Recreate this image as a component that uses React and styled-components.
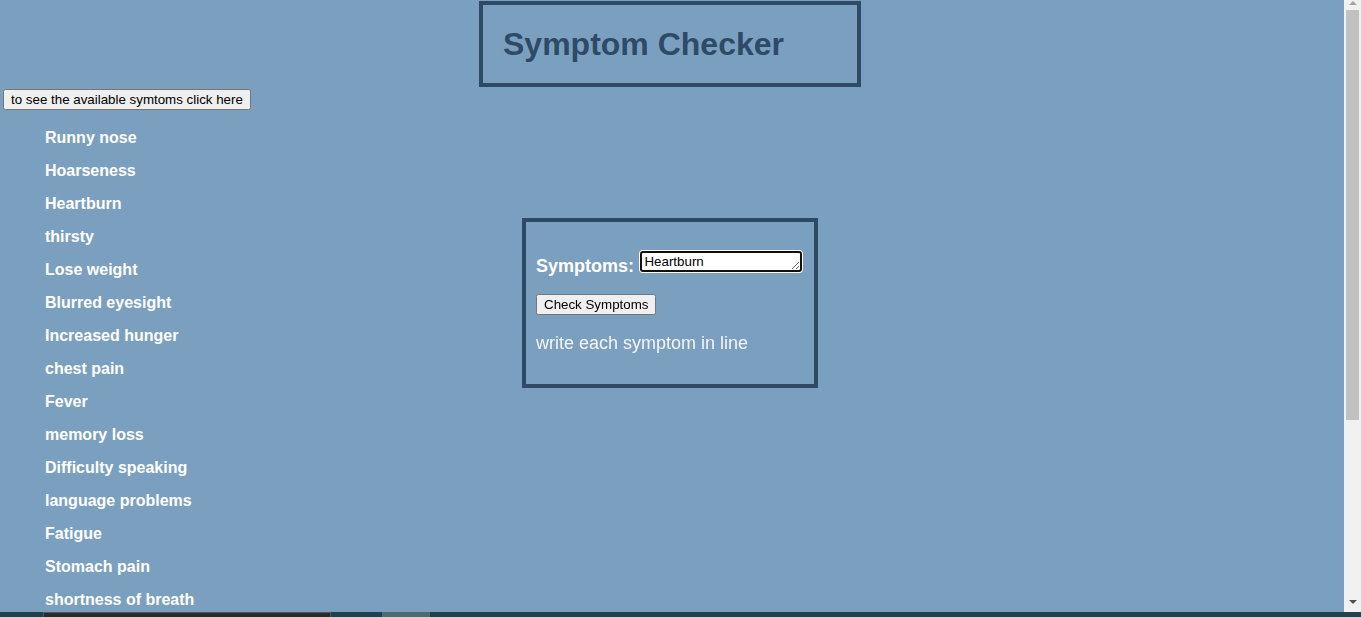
import React, { useEffect, useRef } from "react";
import styled, { createGlobalStyle } from "styled-components";

const Global = createGlobalStyle`
  html, body { margin: 0; padding: 0; height: 100%; overflow: hidden; }
  body { font-family: "Liberation Sans", Arial, sans-serif; background: #7ba0bf; }
  #root { height: 100%; }
`;

const Shell = styled.div`
  height: 617px;
  display: flex;
  flex-direction: column;
`;

const Viewport = styled.div`
  height: 612px;
  display: flex;
`;

const Scroller = styled.div`
  flex: 1;
  overflow: hidden;
  background: #7ba0bf;
`;

const ScrollBar = styled.div`
  width: 17px;
  background: #f1f1f1;
  display: flex;
  flex-direction: column;
  align-items: center;
`;

const ArrowCell = styled.div`
  height: ${(p) => p.$h}px;
  width: 100%;
  display: flex;
  justify-content: center;
  align-items: flex-start;
  padding-top: ${(p) => p.$pt}px;
  box-sizing: border-box;
`;

const Tri = styled.div`
  width: 0;
  height: 0;
  border-left: 4px solid transparent;
  border-right: 4px solid transparent;
  ${(p) =>
    p.$down
      ? `border-top: 4px solid #505050;`
      : `border-bottom: 4px solid #a3a3a3;`}
`;

const Thumb = styled.div`
  width: 13px;
  height: 410px;
  background: #c1c1c1;
`;

const Spacer = styled.div`
  flex: 1;
`;

const Page = styled.div`
  padding-right: 4px;
`;

const Header = styled.header`
  display: flex;
  justify-content: center;
  padding-top: 1px;
`;

const TitleBox = styled.div`
  width: 354px;
  height: 78px;
  padding-left: 20px;
  border: 4px solid #2e4a64;
  display: flex;
  align-items: center;
`;

const Title = styled.h1`
  margin: 0;
  font-size: 32px;
  line-height: 37px;
  font-weight: bold;
  color: #2e4a66;
`;

const Main = styled.main`
  display: grid;
  grid-template-columns: 1fr auto 1fr;
  align-items: start;
  padding-top: 2px;
`;

const Side = styled.div`
  display: flex;
  flex-direction: column;
  align-items: flex-start;
`;

const NativeButton = styled.button`
  font-family: "Liberation Sans", Arial, sans-serif;
  font-size: 13.33px;
  margin-left: ${(p) => p.$ml || 0}px;
`;

const List = styled.ul`
  list-style: none;
  margin: 19px 0 16px;
  padding: 0 0 0 45px;
`;

const Item = styled.li`
  color: #ffffff;
  font-weight: bold;
  font-size: 16px;
  line-height: 18px;
  margin-bottom: 15px;
`;

const CheckBox = styled.section`
  margin-top: 129px;
  width: 268px;
  padding: 10px;
  border: 4px solid #2e4a64;
`;

const Line = styled.p`
  margin: ${(p) => p.$m};
  color: #ffffff;
  font-size: 16px;
  white-space: nowrap;
`;

const Label = styled.label`
  font-weight: bold;
  font-size: 18px;
  color: #ffffff;
`;

const Area = styled.textarea`
  width: 154px;
  height: 14px;
  margin-left: 2px;
  padding: 1px 2px 2px;
  font-family: "Liberation Sans", Arial, sans-serif;
  font-size: 13.33px;
  line-height: 15px;
  border: 2px solid #101010;
  border-radius: 3px;
  box-shadow: 0 0 0 1px #ffffff;
  outline: none;
  background: #fff;
  color: #000;
  caret-color: #000;
  vertical-align: baseline;
  overflow: hidden;
`;

const Hint = styled.p`
  margin: 18px 0 20px;
  font-size: 18px;
  color: #f4f4f4;
`;

const Taskbar = styled.div`
  height: 5px;
  background: #24404c;
  display: flex;
`;

const TaskSeg = styled.div`
  width: ${(p) => p.$w}px;
  margin-left: ${(p) => p.$ml}px;
  background: ${(p) => p.$bg};
  border-top: ${(p) => (p.$border ? "1px solid #555" : "none")};
  border-left: ${(p) => (p.$border ? "1px solid #555" : "none")};
  border-right: ${(p) => (p.$border ? "1px solid #555" : "none")};
  box-sizing: border-box;
`;

const symptoms = [
  "Runny nose",
  "Hoarseness",
  "Heartburn",
  "thirsty",
  "Lose weight",
  "Blurred eyesight",
  "Increased hunger",
  "chest pain",
  "Fever",
  "memory loss",
  "Difficulty speaking",
  "language problems",
  "Fatigue",
  "Stomach pain",
  "shortness of breath",
];

export default function App() {
  const ref = useRef(null);
  useEffect(() => {
    const el = ref.current;
    if (el) {
      el.focus();
      const n = el.value.length;
      el.setSelectionRange(n, n);
    }
  }, []);
  return (
    <Shell>
      <Global />
      <Viewport>
        <Scroller>
          <Page>
            <Header>
              <TitleBox>
                <Title>Symptom Checker</Title>
              </TitleBox>
            </Header>
            <Main>
              <Side>
                <NativeButton $ml={3}>to see the available symtoms click here</NativeButton>
                <List>
                  {symptoms.map((s) => (
                    <Item key={s}>{s}</Item>
                  ))}
                </List>
              </Side>
              <CheckBox>
                <Line $m="19px 0 0">
                  <Label htmlFor="sym">Symptoms:</Label>{" "}
                  <Area id="sym" ref={ref} rows={1} defaultValue="Heartburn" />
                </Line>
                <Line $m="17px 0 0">
                  <NativeButton>Check Symptoms</NativeButton>
                </Line>
                <Hint>write each symptom in line</Hint>
              </CheckBox>
              <div />
            </Main>
          </Page>
        </Scroller>
        <ScrollBar>
          <ArrowCell $h={10} $pt={1}>
            <Tri />
          </ArrowCell>
          <Thumb />
          <Spacer />
          <ArrowCell $h={14} $pt={2} $down>
            <Tri $down />
          </ArrowCell>
        </ScrollBar>
      </Viewport>
      <Taskbar>
        <TaskSeg $ml={43} $w={288} $bg="#2b2b2b" $border />
        <TaskSeg $ml={51} $w={48} $bg="#4f6a70" />
      </Taskbar>
    </Shell>
  );
}
